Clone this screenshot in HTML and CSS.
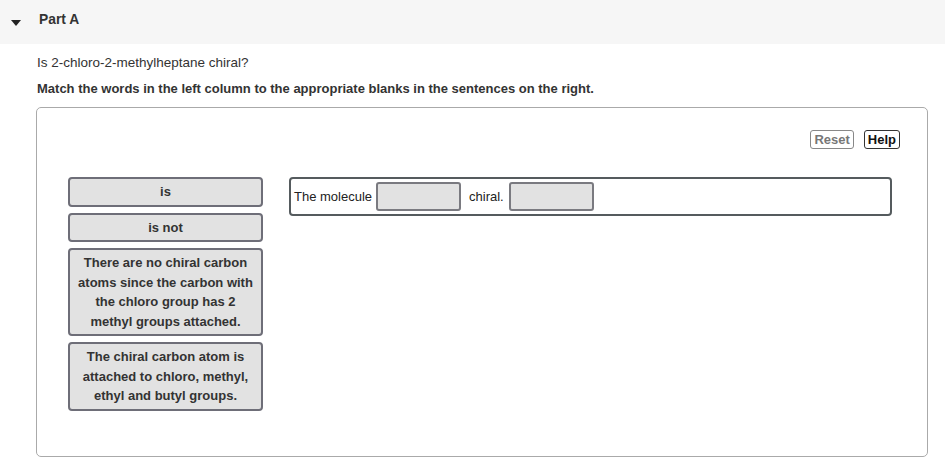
FILE: index.html
```html
<!DOCTYPE html>
<html>
<head>
<meta charset="utf-8">
<link rel="stylesheet" href="styles.css">
</head>
<body>
<div class="part-header">
  <span class="caret"></span>
  <span class="part-title">Part A</span>
</div>
<div class="content">
  <p class="question">Is 2-chloro-2-methylheptane chiral?</p>
  <p class="instructions">Match the words in the left column to the appropriate blanks in the sentences on the right.</p>
  <div class="panel">
    <div class="toolbar">
      <button class="btn btn-reset">Reset</button>
      <button class="btn btn-help">Help</button>
    </div>
    <div class="workspace">
      <div class="choices">
        <div class="choice">is</div>
        <div class="choice">is not</div>
        <div class="choice">There are no chiral carbon atoms since the carbon with the chloro group has 2 methyl groups attached.</div>
        <div class="choice">The chiral carbon atom is attached to chloro, methyl, ethyl and butyl groups.</div>
      </div>
      <div class="sentences">
        <div class="sentence">
          <span class="word">The molecule</span>
          <span class="blank"></span>
          <span class="word word-gap">chiral.</span>
          <span class="blank"></span>
        </div>
      </div>
    </div>
  </div>
</div>
</body>
</html>
```

FILE: styles.css
```css
* { box-sizing: border-box; }
body {
  margin: 0;
  font-family: "Liberation Sans", Arial, Helvetica, sans-serif;
  color: #333;
  background: #fff;
}
.part-header {
  height: 44px;
  background: #f6f6f6;
  display: flex;
  align-items: center;
  padding-left: 11px;
}
.caret {
  width: 0;
  height: 0;
  border-left: 5px solid transparent;
  border-right: 5px solid transparent;
  border-top: 6px solid #222;
  margin-right: 18px;
  margin-top: 2px;
}
.part-title {
  font-size: 13.8px;
  font-weight: bold;
  color: #333;
  margin-top: -6px;
}
.content {
  padding: 0 17px 0 36px;
}
.question {
  margin: 0;
  padding: 11px 0 0 1px;
  font-size: 13.5px;
  line-height: 16px;
}
.instructions {
  margin: 0;
  padding: 10px 0 0 1px;
  font-size: 13px;
  font-weight: bold;
  line-height: 16px;
}
.panel {
  margin-top: 10px;
  height: 350px;
  border: 1px solid #aaa;
  border-radius: 5px;
  padding: 22px 27px 0 31px;
}
.toolbar {
  display: flex;
  justify-content: flex-end;
  gap: 10px;
}
.btn {
  font-family: "Liberation Sans", Arial, Helvetica, sans-serif;
  font-size: 13px;
  font-weight: bold;
  height: 19px;
  padding: 0 3px;
  background: #fff;
  border-radius: 3px;
  line-height: 17px;
}
.btn-reset {
  color: #777;
  border: 1px solid #888;
}
.btn-help {
  color: #111;
  border: 1px solid #333;
}
.workspace {
  display: flex;
  gap: 26px;
  margin-top: 28px;
  padding-right: 8px;
}
.choices {
  width: 195px;
  display: flex;
  flex-direction: column;
  gap: 6px;
}
.choice {
  background: #e2e2e2;
  border: 2px solid #6e6e78;
  border-radius: 4px;
  padding: 3px 4px;
  font-size: 13px;
  font-weight: bold;
  line-height: 19.5px;
  text-align: center;
  color: #333;
}
.sentences {
  flex: 1;
}
.sentence {
  height: 39px;
  border: 2px solid #555b5e;
  border-radius: 4px;
  display: flex;
  align-items: center;
  padding-left: 3px;
  font-size: 13px;
}
.word {
  margin-right: 4px;
  color: #222;
}
.word-gap {
  margin-left: 8px;
  margin-right: 5px;
}
.blank {
  width: 85px;
  height: 29px;
  background: #e2e2e2;
  border: 2px solid #7a7a80;
  border-radius: 3px;
}
```
